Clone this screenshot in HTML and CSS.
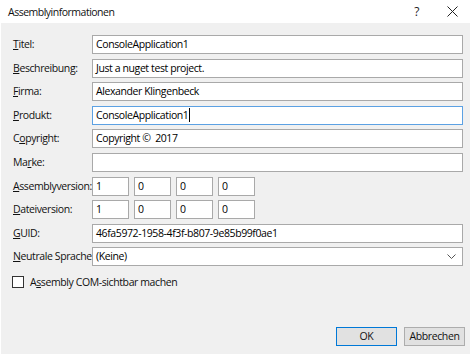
FILE: index.html
```html
<!DOCTYPE html>
<html>
<head>
<meta charset="utf-8">
<link rel="stylesheet" href="styles.css">
</head>
<body>
<div class="window">
  <div class="titlebar">
    <span class="title">Assemblyinformationen</span>
    <span class="tb-help">?</span>
    <svg class="tb-close" width="11" height="11" viewBox="0 0 11 11"><path d="M0.5 0.5 L10.5 10.5 M10.5 0.5 L0.5 10.5" stroke="#222" stroke-width="1"/></svg>
  </div>
  <div class="body">
    <div class="form">
      <label class="lbl"><u>T</u>itel:</label>
      <div class="field">ConsoleApplication1</div>
      <label class="lbl"><u>B</u>eschreibung:</label>
      <div class="field">Just a nuget test project.</div>
      <label class="lbl"><u>F</u>irma:</label>
      <div class="field">Alexander Klingenbeck</div>
      <label class="lbl"><u>P</u>rodukt:</label>
      <div class="field focus">ConsoleApplication1<span class="caret"></span></div>
      <label class="lbl">C<u>o</u>pyright:</label>
      <div class="field">Copyright ©&nbsp; 2017</div>
      <label class="lbl">Ma<u>r</u>ke:</label>
      <div class="field"></div>
      <label class="lbl"><u>A</u>ssemblyversion:</label>
      <div class="vers"><div class="field">1</div><div class="field">0</div><div class="field">0</div><div class="field">0</div></div>
      <label class="lbl"><u>D</u>ateiversion:</label>
      <div class="vers"><div class="field">1</div><div class="field">0</div><div class="field">0</div><div class="field">0</div></div>
      <label class="lbl"><u>G</u>UID:</label>
      <div class="field">46fa5972-1958-4f3f-b807-9e85b99f0ae1</div>
      <label class="lbl"><u>N</u>eutrale Sprache:</label>
      <div class="field select"><span>(Keine)</span><svg width="9" height="5" viewBox="0 0 9 5"><path d="M0.5 0.5 L4.5 4.5 L8.5 0.5" fill="none" stroke="#555" stroke-width="1"/></svg></div>
    </div>
    <div class="check"><span class="box"></span><span>A<u>s</u>sembly COM-sichtbar machen</span></div>
    <div class="buttons">
      <div class="btn default">OK</div>
      <div class="btn">Abbrechen</div>
    </div>
  </div>
</div>
</body>
</html>
```
FILE: styles.css
```css
* { box-sizing: border-box; }
html, body { margin: 0; padding: 0; background: #fff; }
body { font-family: "Open Sans", "Noto Sans", sans-serif; font-size: 10.5px; letter-spacing: -0.4px; color: #000; }
.window { width: 474px; height: 357px; display: flex; flex-direction: column; }
.titlebar { height: 23px; background: #fff; display: flex; align-items: center; padding: 0 0 0 8px; }
.title { font-size: 10.5px; letter-spacing: -0.5px; color: #111; flex: 1; }
.tb-help { font-size: 12px; color: #222; margin-right: 28px; }
.tb-close { margin-right: 16px; }
.body { background: #f0f0f0; height: 331px; margin: 0 4px 0 1px; padding: 12px 0 0 12px; display: flex; flex-direction: column; }
.form { display: grid; grid-template-columns: 79px 371px; grid-auto-rows: 19px; row-gap: 4.6px; align-items: center; }
.lbl { color: #111; white-space: nowrap; line-height: 19px; }
.field { height: 19px; background: #fff; border: 1px solid #a9a9a9; padding: 0 3px; line-height: 17px; white-space: nowrap; display: flex; align-items: center; }
.field.focus { border-color: #5ca1e3; }
.caret { display: inline-block; width: 1px; height: 14px; background: #000; margin-left: 1px; }
.vers { display: flex; gap: 5px; }
.vers .field { width: 37px; }
.select { justify-content: space-between; padding-right: 6px; }
.check { display: flex; align-items: center; gap: 6px; margin: 9px 0 0 -1px; color: #111; }
.box { width: 12px; height: 12px; border: 1px solid #333; background: #fff; }
.buttons { margin-top: auto; margin-bottom: 8px; display: flex; justify-content: flex-end; gap: 7px; padding-right: 5px; }
.btn { width: 61px; height: 19px; background: #e1e1e1; border: 1px solid #adadad; text-align: center; line-height: 17px; color: #111; }
.btn.default { border-color: #0078d7; }
```
